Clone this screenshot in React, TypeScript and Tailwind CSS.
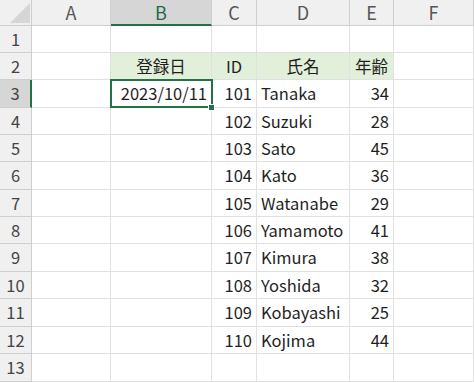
import React from 'react';

const font = { fontFamily: '"Noto Sans CJK JP", "Noto Sans", sans-serif' };

const people: [number, string, number][] = [
  [101, 'Tanaka', 34],
  [102, 'Suzuki', 28],
  [103, 'Sato', 45],
  [104, 'Kato', 36],
  [105, 'Watanabe', 29],
  [106, 'Yamamoto', 41],
  [107, 'Kimura', 38],
  [108, 'Yoshida', 32],
  [109, 'Kobayashi', 25],
  [110, 'Kojima', 44],
];

const rowHeights = [27, 27, 28, 27, 27, 28, 27, 27, 28, 27, 28, 27, 28];
const colWidths = ['w-[79px]', 'w-[101px]', 'w-[45px]', 'w-[93px]', 'w-[44px]', 'flex-1'];
const letters = ['A', 'B', 'C', 'D', 'E', 'F'];

type Cell = { text?: string; align?: 'left' | 'right' | 'center'; green?: boolean; selected?: boolean };

function cellsFor(row: number): Cell[] {
  const cells: Cell[] = [{}, {}, {}, {}, {}, {}];
  if (row === 2) {
    cells[1] = { text: '登録日', align: 'center', green: true };
    cells[2] = { text: 'ID', align: 'center', green: true };
    cells[3] = { text: '氏名', align: 'center', green: true };
    cells[4] = { text: '年齢', align: 'center', green: true };
  }
  if (row >= 3 && row <= 12) {
    const [id, name, age] = people[row - 3];
    cells[2] = { text: String(id), align: 'right' };
    cells[3] = { text: name, align: 'left' };
    cells[4] = { text: String(age), align: 'right' };
  }
  if (row === 3) cells[1] = { text: '2023/10/11', align: 'right', selected: true };
  return cells;
}

export default function App() {
  return (
    <div className="w-[474px] h-[382px] overflow-hidden bg-white text-[16.5px] text-[#1f1f1f]" style={font}>
      {/* column headers */}
      <div className="flex h-[26px]">
        <div className="relative w-[32px] shrink-0 bg-[#f0f0f0] border-r border-b border-[#cfcfcf]">
          <svg className="absolute left-[10px] top-[3px]" width="20" height="20" viewBox="0 0 20 20">
            <polygon points="20,0 20,20 0,20" fill="#d6d6d6" />
          </svg>
        </div>
        {letters.map((l, i) => (
          <div
            key={l}
            className={`${colWidths[i]} shrink-0 flex items-center justify-center text-[18px] border-r ${
              l === 'B'
                ? 'bg-[#d6d6d6] text-[#1e6b43] border-b-2 border-b-[#217346] border-r-[#cfcfcf]'
                : 'bg-[#f0f0f0] text-[#555] border-b border-[#cfcfcf]'
            }`}
          >
            {l}
          </div>
        ))}
      </div>

      {rowHeights.map((h, idx) => {
        const row = idx + 1;
        const cells = cellsFor(row);
        return (
          <div key={row} className="flex" style={{ height: h }}>
            <div
              className={`w-[32px] shrink-0 flex items-center justify-center text-[#444] border-b ${
                row === 3
                  ? 'bg-[#d6d6d6] border-r-2 border-r-[#217346] border-b-[#cfcfcf]'
                  : 'bg-[#f0f0f0] border-r border-[#cfcfcf]'
              }`}
            >
              {row}
            </div>
            {cells.map((c, i) => (
              <div
                key={i}
                className={`${colWidths[i]} shrink-0 relative flex items-center px-[4px] border-r border-b border-[#e1e1e1] whitespace-nowrap ${
                  c.green ? 'bg-[#e2efda]' : ''
                } ${c.align === 'right' ? 'justify-end' : c.align === 'center' ? 'justify-center' : 'justify-start'}`}
              >
                {c.text}
                {c.selected && (
                  <>
                    <div className="absolute z-10 left-[-1px] top-[-1px] right-[-2px] bottom-[-1px] border-2 border-[#217346]" />
                    <div className="absolute z-10 right-[-4px] bottom-[-4px] w-[7px] h-[7px] bg-[#217346] border border-white" />
                  </>
                )}
              </div>
            ))}
          </div>
        );
      })}
    </div>
  );
}
